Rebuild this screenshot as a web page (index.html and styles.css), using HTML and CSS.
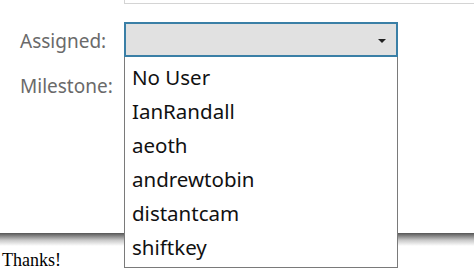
FILE: index.html
```html
<!DOCTYPE html>
<html lang="en">

<head>
    <meta charset="UTF-8">
    <title>Assign Issue</title>
    <link rel="stylesheet" href="styles.css">
</head>

<body>
    <div class="panel">
        <div class="top-field"></div>
        <div class="form">
            <div class="row">
                <label class="label">Assigned:</label>
                <div class="select-wrap">
                    <div class="select">
                        <span class="arrow"></span>
                    </div>
                    <ul class="dropdown">
                        <li>No User</li>
                        <li>IanRandall</li>
                        <li>aeoth</li>
                        <li>andrewtobin</li>
                        <li>distantcam</li>
                        <li>shiftkey</li>
                    </ul>
                </div>
            </div>
            <div class="row">
                <label class="label">Milestone:</label>
            </div>
        </div>
    </div>
    <div class="shadow"></div>
    <p class="thanks">Thanks!</p>
</body>

</html>
```

FILE: styles.css
```css
body {
    margin: 0;
    font-family: 'Liberation Serif', serif;
    background: #fff;
    overflow: hidden;
}

.panel {
    height: 233px;
    background: #fff;
    font-family: 'Noto Sans', 'Open Sans', sans-serif;
}

.top-field {
    margin-left: 124px;
    height: 3px;
    border: 1px solid #d4d4d4;
    border-top: none;
    border-right: none;
}

.form {
    padding-top: 18px;
}

.row {
    display: flex;
    align-items: center;
    height: 35px;
    margin-bottom: 10px;
}

.label {
    width: 124px;
    padding: 2px 0 0 20px;
    box-sizing: border-box;
    color: #6a6a6a;
    font-size: 19px;
}

.select-wrap {
    position: relative;
    width: 274px;
}

.select {
    height: 35px;
    box-sizing: border-box;
    border: 2px solid #3a7fa6;
    background: #e1e1e1;
    position: relative;
}

.arrow {
    position: absolute;
    right: 10px;
    top: 15px;
    border-left: 4px solid transparent;
    border-right: 4px solid transparent;
    border-top: 4px solid #222;
}

.dropdown {
    position: absolute;
    z-index: 1;
    left: 0;
    top: 35px;
    width: 274px;
    height: 211px;
    box-sizing: border-box;
    margin: 0;
    padding: 3px 0 0 7px;
    list-style: none;
    background: #fff;
    border: 1px solid #7a7a7a;
    border-top: none;
    color: #111;
    font-size: 20.5px;
}

.dropdown li {
    height: 34px;
    line-height: 34px;
}

.shadow {
    height: 13px;
    background: linear-gradient(#555, #c8c8c8 55%, #fff);
}

.thanks {
    margin: 4px 0 0 2px;
    font-size: 18px;
    color: #000;
}
```
